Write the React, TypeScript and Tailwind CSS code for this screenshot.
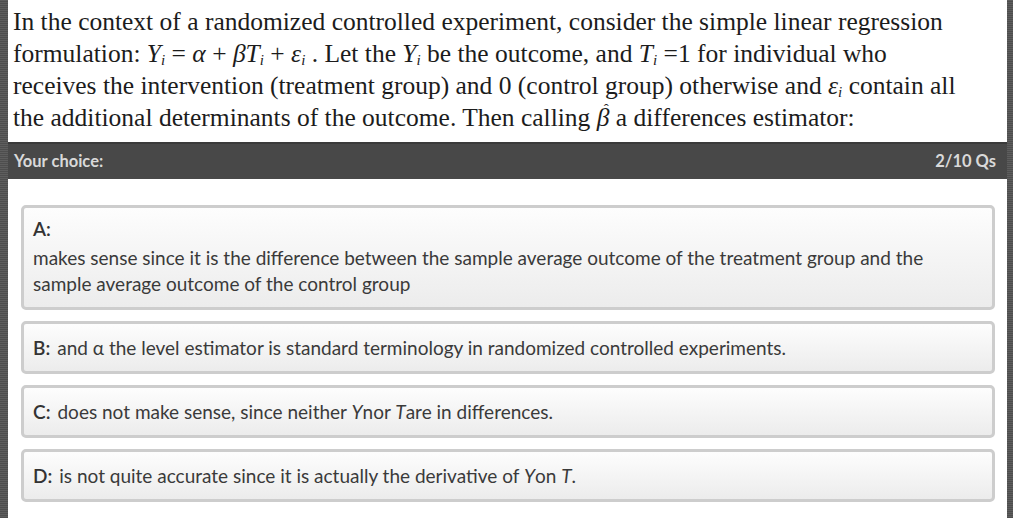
import type { ReactNode } from 'react'

type Choice = { key: string; body: ReactNode; stacked?: boolean }

const choices: Choice[] = [
  {
    key: 'A',
    stacked: true,
    body: 'makes sense since it is the difference between the sample average outcome of the treatment group and the sample average outcome of the control group',
  },
  {
    key: 'B',
    body: <>and α the level estimator is standard terminology in randomized controlled experiments.</>,
  },
  {
    key: 'C',
    body: (
      <>
        does not make sense, since neither <i>Y</i>nor <i>T</i>are in differences.
      </>
    ),
  },
  {
    key: 'D',
    body: (
      <>
        is not quite accurate since it is actually the derivative of <i>Y</i>on <i>T</i>.
      </>
    ),
  },
]

function Sub({ children }: { children: ReactNode }) {
  return <sub className="text-[15px] italic relative top-[3px]">{children}</sub>
}

function BetaHat() {
  return (
    <span className="relative inline-block italic">
      β
      <span className="absolute left-[7px] top-[2px] not-italic text-[15px] leading-[10px]">ˆ</span>
    </span>
  )
}

function Question() {
  return (
    <div className="bg-white border-b-2 border-[#3a3a3a] pl-[5px] pt-[6px] pb-[8px] font-['Liberation_Serif',serif] text-[25.5px] leading-[32px] text-[#1c1c1c] whitespace-nowrap">
      <p>In the context of a randomized controlled experiment, consider the simple linear regression</p>
      <p>
        formulation: <i>Y</i><Sub>i</Sub> = <i>α</i> + <i>βT</i><Sub>i</Sub> + <i>ε</i><Sub>i</Sub> . Let the <i>Y</i><Sub>i</Sub> be the outcome, and <i>T</i><Sub>i</Sub> =1 for individual who
      </p>
      <p>
        receives the intervention (treatment group) and 0 (control group) otherwise and <i>ε</i><Sub>i</Sub> contain all
      </p>
      <p>
        the additional determinants of the outcome. Then calling <BetaHat /> a differences estimator:
      </p>
    </div>
  )
}

export default function App() {
  return (
    <div className="w-[1013px] h-[518px] flex bg-white overflow-hidden">
      {/* edge strips */}
      <div className="w-[8px] shrink-0 bg-[repeating-linear-gradient(180deg,#5e5e5e_0px,#5e5e5e_1px,#4e4e4e_1px,#4e4e4e_2px)]" />
      <div className="flex-1 min-w-0 flex flex-col">
        <Question />
        <div className="h-[35px] shrink-0 bg-[#484848] flex items-center justify-between px-[6px] font-['Lato',sans-serif] text-[16.5px] font-bold text-[#d9d9d9]">
          <span>Your choice:</span>
          <span className="pr-[5px]">2/10 Qs</span>
        </div>
        <div className="flex flex-col gap-[11px] pt-[26px] pl-[13px] pr-[12px] font-['Lato',sans-serif] text-[19px] leading-[26px] text-[#3a3a3a]">
          {choices.map(c => (
            <div
              key={c.key}
              className="border-[3px] border-[#cdcdcd] rounded-[5px] bg-gradient-to-b from-[#fdfdfd] to-[#ececec] px-[9px] pt-[11px] pb-[10px]"
            >
              {c.stacked ? (
                <>
                  <div className="font-semibold text-[#333] leading-[20px] mb-[6px]">{c.key}:</div>
                  <div>{c.body}</div>
                </>
              ) : (
                <div className="whitespace-nowrap">
                  <span className="font-semibold text-[#333] mr-[7px]">{c.key}:</span>
                  {c.body}
                </div>
              )}
            </div>
          ))}
        </div>
      </div>
      <div className="w-[6px] shrink-0 bg-[repeating-linear-gradient(180deg,#5e5e5e_0px,#5e5e5e_1px,#4e4e4e_1px,#4e4e4e_2px)]" />
    </div>
  )
}
